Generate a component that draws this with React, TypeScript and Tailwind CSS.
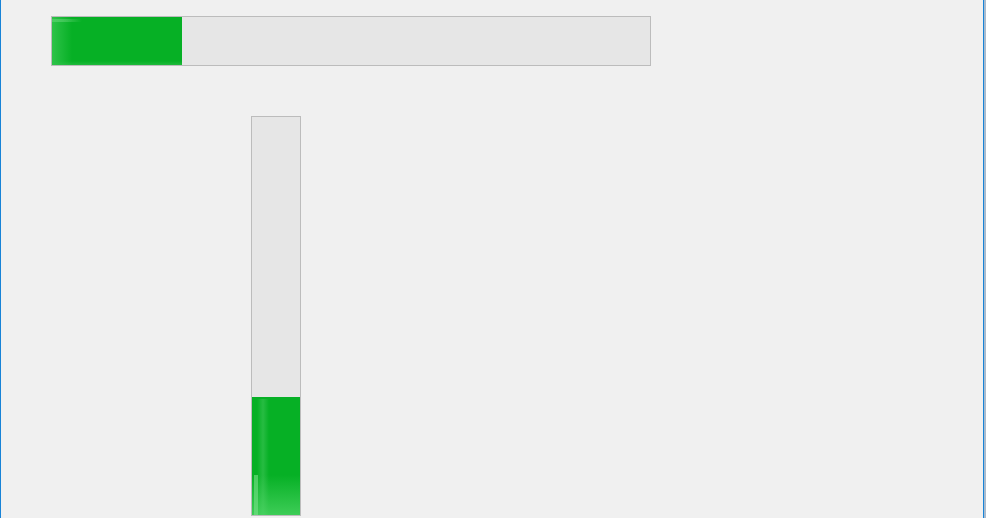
import React from 'react';

function HBar({ value }: { value: number }) {
    return (
        <div className="w-[600px] h-[50px] border border-[#bcbcbc] bg-[#e6e6e6] flex">
            <div
                className="relative h-full bg-[#06b025] overflow-hidden"
                style={{ width: `${value}%` }}
            >
                {/* windows-style sheen */}
                <div className="absolute left-0 top-[2px] w-[30px] h-[3px] bg-gradient-to-r from-[#7ddc8d] to-transparent opacity-80" />
                <div className="absolute left-0 top-0 bottom-0 w-[20px] bg-gradient-to-r from-[#3fcb58] to-transparent opacity-70" />
                <div className="absolute left-0 right-0 bottom-0 h-[4px] bg-gradient-to-t from-[#2fc14a] to-transparent opacity-60" />
            </div>
        </div>
    );
}

function VBar({ value }: { value: number }) {
    return (
        <div className="w-[50px] h-[400px] border border-[#bcbcbc] bg-[#e6e6e6] flex flex-col justify-end">
            <div
                className="relative w-full bg-[#06b025] overflow-hidden"
                style={{ height: `${value}%` }}
            >
                <div className="absolute top-[2px] bottom-0 left-[5px] w-[12px] bg-gradient-to-r from-transparent via-[#3cc455] to-transparent opacity-60" />
                <div className="absolute bottom-0 left-0 right-0 h-[40px] bg-gradient-to-t from-[#55d96c] to-transparent opacity-70" />
                <div className="absolute bottom-0 left-[2px] w-[4px] h-[40px] bg-[#7ae18b] opacity-60" />
            </div>
        </div>
    );
}

export default function App() {
    return (
        <div className="w-[986px] h-[518px] overflow-hidden flex bg-[#f0f0f0]">
            <div className="w-px h-full bg-[#1883d7]" />
            <div className="flex-1 flex flex-col pl-[50px] pt-[16px] gap-[50px]">
                <HBar value={21.8} />
                <div className="pl-[200px]">
                    <VBar value={29.7} />
                </div>
            </div>
            <div className="w-px h-full bg-[#1883d7]" />
            <div className="w-[2px] h-full bg-[#a9bccf]" />
        </div>
    );
}
